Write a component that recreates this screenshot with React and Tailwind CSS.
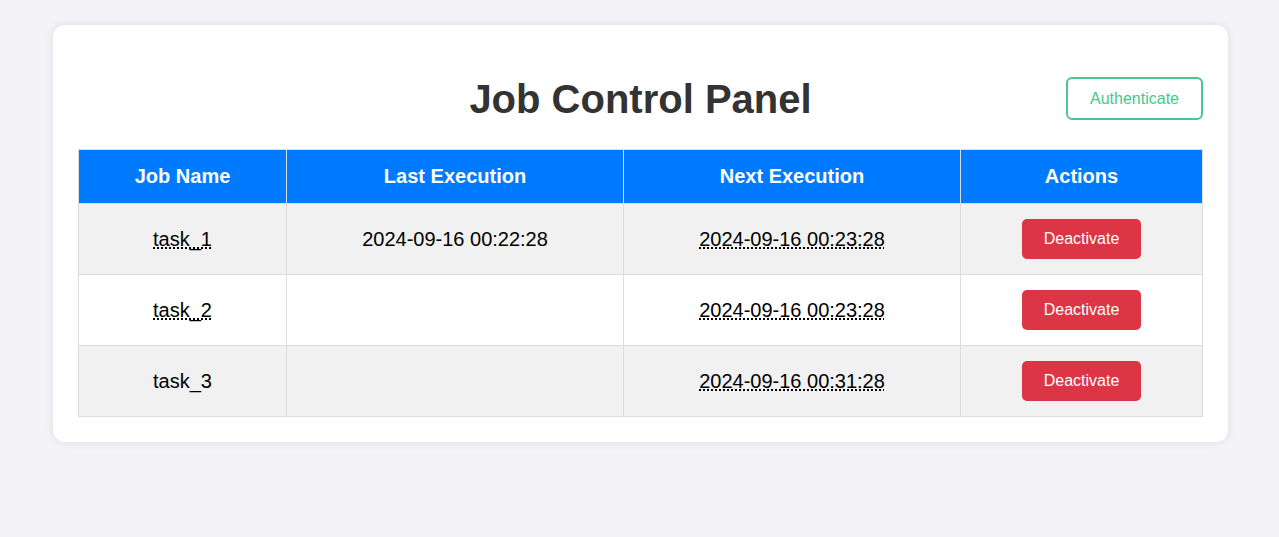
import React from 'react';

const jobs = [
  { name: 'task_1', nameTitle: true, last: '2024-09-16 00:22:28', next: '2024-09-16 00:23:28' },
  { name: 'task_2', nameTitle: true, last: '', next: '2024-09-16 00:23:28' },
  { name: 'task_3', nameTitle: false, last: '', next: '2024-09-16 00:31:28' },
];

const App = () => {
  return (
    <div
      className="min-h-[537px] bg-[#f4f4f8] pt-[25px]"
      style={{ fontFamily: '"Liberation Sans", Arial, sans-serif' }}
    >
      <div className="ml-[53px] w-[1175px] rounded-xl bg-white p-[25px] shadow-[0_0_10px_rgba(0,0,0,0.1)]">
        <div className="relative flex items-center justify-center">
          <h1 className="mt-[26px] mb-[27px] text-[40px] leading-[46px] font-bold text-[#333]">Job Control Panel</h1>
          <button
            type="button"
            className="absolute right-0 top-[27px] h-[43px] rounded-md border-2 border-[#48c78e] bg-white px-[22px] text-base text-[#48c78e]"
          >
            Authenticate
          </button>
        </div>

        <table className="w-full border-collapse text-center text-[20px] text-black">
          <thead>
            <tr className="bg-[#007bff] text-white">
              <th className="w-[208px] border border-[#ddd] py-[15px] font-bold leading-[23px]">Job Name</th>
              <th className="w-[337px] border border-[#ddd] py-[15px] font-bold leading-[23px]">Last Execution</th>
              <th className="w-[337px] border border-[#ddd] py-[15px] font-bold leading-[23px]">Next Execution</th>
              <th className="border border-[#ddd] py-[15px] font-bold leading-[23px]">Actions</th>
            </tr>
          </thead>
          <tbody>
            {jobs.map((job, i) => (
              <tr key={job.name} className={i % 2 === 0 ? 'bg-[#f1f1f1]' : 'bg-white'}>
                <td className="border border-[#ddd] py-[15px]">
                  {job.nameTitle ? <abbr title={job.name}>{job.name}</abbr> : job.name}
                </td>
                <td className="border border-[#ddd] py-[15px]">{job.last}</td>
                <td className="border border-[#ddd] py-[15px]">
                  <abbr title={job.next}>{job.next}</abbr>
                </td>
                <td className="border border-[#ddd] py-[15px]">
                  <button
                    type="button"
                    className="h-10 rounded-[5px] bg-[#dc3545] px-[22px] text-base text-white"
                  >
                    Deactivate
                  </button>
                </td>
              </tr>
            ))}
          </tbody>
        </table>
      </div>
    </div>
  );
};

export default App;
